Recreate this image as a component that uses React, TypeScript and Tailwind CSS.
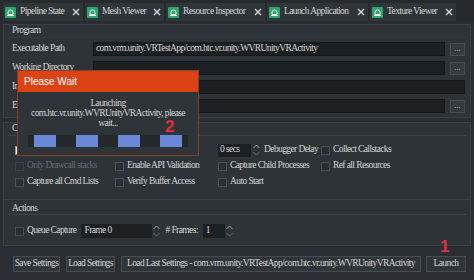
import React from 'react'

const serif = { fontFamily: '"Liberation Serif", "DejaVu Serif", serif' }
const sans = { fontFamily: '"Liberation Sans", Arial, sans-serif' }

const tabs: [string, string][] = [
    ['Pipeline State', 'w-[80px]'],
    ['Mesh Viewer', 'w-[79px]'],
    ['Resource Inspector', 'w-[99px]'],
    ['Launch Application', 'w-[101px]'],
    ['Texture Viewer', 'w-[86px]'],
]

const TabIcon = () => (
    <svg width="11" height="11" viewBox="0 0 11 11" className="shrink-0">
        <rect width="11" height="11" rx="1" fill="#2ea56a" />
        <path d="M3 7.5 V5.5 a2.5 2.5 0 0 1 5 0 V7.5 Z" fill="none" stroke="#e8fff2" strokeWidth="1" />
        <path d="M2 8.5 H9" stroke="#e8fff2" strokeWidth="1" />
    </svg>
)

const CloseX = () => (
    <svg width="8" height="8" viewBox="0 0 8 8" className="shrink-0">
        <path d="M1 1 L7 7 M7 1 L1 7" stroke="#d8d8d8" strokeWidth="1.4" />
    </svg>
)

const Spin = () => (
    <svg width="9" height="14" viewBox="0 0 9 14" className="shrink-0">
        <path d="M1.5 5 L4.5 2 L7.5 5" fill="none" stroke="#9aa0a5" strokeWidth="1" />
        <path d="M1.5 9 L4.5 12 L7.5 9" fill="none" stroke="#6c7277" strokeWidth="1" />
    </svg>
)

const Check = ({ checked = false, disabled = false }: { checked?: boolean; disabled?: boolean }) => (
    <span
        className={
            'w-[9px] h-[9px] shrink-0 border ' +
            (checked
                ? 'bg-[#e6e6e6] border-[#9a9a9a]'
                : disabled
                  ? 'border-[#3b4045] bg-[#2e3338]'
                  : 'border-[#4a5055] bg-[#2a2e32]')
        }
    />
)

const CheckItem = ({
    label,
    checked,
    disabled,
    w,
}: {
    label: string
    checked?: boolean
    disabled?: boolean
    w: string
}) => (
    <div className={'flex items-center gap-[3px] ' + w}>
        <Check checked={checked} disabled={disabled} />
        <span className={'whitespace-nowrap ' + (disabled ? 'text-[#666b70]' : '')}>{label}</span>
    </div>
)

const Dots = () => (
    <div className="w-[15px] h-[13px] border border-[#474c51] bg-[#353a3f] flex items-end justify-center pb-[2px] text-[8px] tracking-normal leading-none text-[#cfcfcf]">
        ...
    </div>
)

const Field = ({ value = '', button = true }: { value?: string; button?: boolean }) => (
    <div className="flex items-center gap-[5px] flex-1">
        <div className="flex-1 h-[14px] bg-[#1d2023] border border-[#15181a] flex items-center pl-[2px] whitespace-nowrap overflow-hidden">
            {value}
        </div>
        {button && <Dots />}
    </div>
)

const Btn = ({ children, w }: { children: React.ReactNode; w: string }) => (
    <div
        className={
            'h-[16px] border border-[#474c51] bg-[#30353a] flex items-center justify-center whitespace-nowrap ' + w
        }
    >
        {children}
    </div>
)

export default function App() {
    return (
        <div
            className="w-[474px] h-[280px] bg-[#2a2e32] relative overflow-hidden text-[9.5px] leading-none text-[#d4d4d4] tracking-[-0.6px]"
            style={serif}
        >
            {/* tabs */}
            <div className="h-[22px] flex items-start pt-[3px] pl-[3px] gap-[2px] bg-[#262a2d]">
                {tabs.map(([t, w]) => (
                    <div key={t} className={'h-[18px] bg-[#30353a] flex items-center pl-[2px] pr-[3px] ' + w}>
                        <TabIcon />
                        <span className="ml-[4px] flex-1 whitespace-nowrap">{t}</span>
                        <CloseX />
                    </div>
                ))}
            </div>

            <div className="px-[3px] flex flex-col">
                {/* Program */}
                <div className="mt-[2px] h-[94px] border border-[#3a3f44] bg-[#2e3338]">
                    <div className="mx-[4px] h-[13px] border-b border-[#353a3f] flex items-center pl-[4px]">Program</div>
                    <div className="flex flex-col gap-[5px] pt-[4px] pl-[8px] pr-[5px]">
                        {[
                            ['Executable Path', 'com.vrm.unity.VRTestApp/com.htc.vr.unity.WVRUnityVRActivity', true],
                            ['Working Directory', '', true],
                            ['Intent Arguments', '', false],
                            ['Environment Variables', '', true],
                        ].map(([l, v, b]) => (
                            <div key={l as string} className="flex items-center h-[14px]">
                                <span className="w-[81px] shrink-0 whitespace-nowrap">{l}</span>
                                <Field value={v as string} button={b as boolean} />
                            </div>
                        ))}
                    </div>
                </div>

                {/* Capture Options */}
                <div className="mt-[4px] h-[78px] border border-[#3a3f44] bg-[#2e3338]">
                    <div className="mx-[4px] h-[13px] border-b border-[#3c4247] flex items-center pl-[4px]">
                        Capture Options
                    </div>
                    <div className="flex flex-col pt-[6px] pl-[11px]">
                        <div className="flex items-center h-[16px]">
                            <CheckItem w="w-[100px]" label="Allow Fullscreen" checked />
                            <CheckItem w="w-[103px]" label="Allow VSync" checked />
                            <div className="w-[103px] flex items-center gap-[1px]">
                                <div className="w-[33px] h-[13px] bg-[#1d2023] flex items-center pl-[2px]">0 secs</div>
                                <Spin />
                                <span className="ml-[2px] whitespace-nowrap">Debugger Delay</span>
                            </div>
                            <CheckItem w="w-[100px]" label="Collect Callstacks" />
                        </div>
                        <div className="flex items-center h-[16px]">
                            <CheckItem w="w-[100px]" label="Only Drawcall stacks" disabled />
                            <CheckItem w="w-[103px]" label="Enable API Validation" />
                            <CheckItem w="w-[103px]" label="Capture Child Processes" />
                            <CheckItem w="w-[100px]" label="Ref all Resources" />
                        </div>
                        <div className="flex items-center h-[16px]">
                            <CheckItem w="w-[100px]" label="Capture all Cmd Lists" />
                            <CheckItem w="w-[103px]" label="Verify Buffer Access" />
                            <CheckItem w="w-[103px]" label="Auto Start" />
                        </div>
                    </div>
                </div>

                {/* Actions */}
                <div className="h-[46px] border border-[#3a3f44] border-t-0 bg-[#2e3338]">
                    <div className="mx-[4px] h-[15px] border-b border-[#3c4247] flex items-end pb-[1px] pl-[4px]">
                        Actions
                    </div>
                    <div className="flex items-center h-[14px] mt-[9px] pl-[11px]">
                        <Check />
                        <span className="ml-[3px] whitespace-nowrap">Queue Capture</span>
                        <div className="ml-[5px] w-[71px] h-[14px] bg-[#1d2023] flex items-center pl-[3px]">Frame 0</div>
                        <Spin />
                        <span className="ml-[4px] whitespace-nowrap"># Frames:</span>
                        <div className="ml-[5px] w-[22px] h-[14px] bg-[#1d2023] flex items-center pl-[3px]">1</div>
                        <Spin />
                    </div>
                </div>

                {/* bottom buttons */}
                <div className="flex items-center mt-[10px] pl-[10px]">
                    <Btn w="w-[47px]">Save Settings</Btn>
                    <Btn w="w-[49px] ml-[6px]">Load Settings</Btn>
                    <Btn w="w-[300px] ml-[6px]">
                        Load Last Settings - com.vrm.unity.VRTestApp/com.htc.vr.unity.WVRUnityVRActivity
                    </Btn>
                    <Btn w="w-[40px] ml-[5px]">Launch</Btn>
                </div>
            </div>

            {/* Please Wait dialog */}
            <div className="absolute left-[17px] top-[70px] w-[182px] h-[86px] border border-[#8a3b26] bg-[#2f3438] flex flex-col">
                <div className="h-[21px] bg-[#db4315] flex items-center pl-[6px] text-[10px] text-white tracking-normal" style={sans}>
                    Please Wait
                </div>
                <div className="flex flex-col items-center pt-[6px] leading-[10px] text-center">
                    <span>Launching</span>
                    <span>com.htc.vr.unity.WVRUnityVRActivity, please</span>
                    <span>wait...</span>
                </div>
                <div className="mx-[10px] mt-[7px] h-[12px] bg-[#24282b] flex items-center justify-between px-[6px]">
                    <span className="w-[22px] h-[12px] bg-[#6a88d8]" />
                    <span className="w-[22px] h-[12px] bg-[#6a88d8]" />
                    <span className="w-[22px] h-[12px] bg-[#6a88d8]" />
                    <span className="w-[22px] h-[12px] bg-[#6a88d8]" />
                </div>
            </div>

            {/* annotations */}
            <span className="absolute left-[165px] top-[118px] text-[17px] font-bold text-[#e0303c] tracking-normal" style={sans}>
                2
            </span>
            <span className="absolute left-[440px] top-[238px] text-[17px] font-bold text-[#e0303c] tracking-normal" style={sans}>
                1
            </span>
        </div>
    )
}
